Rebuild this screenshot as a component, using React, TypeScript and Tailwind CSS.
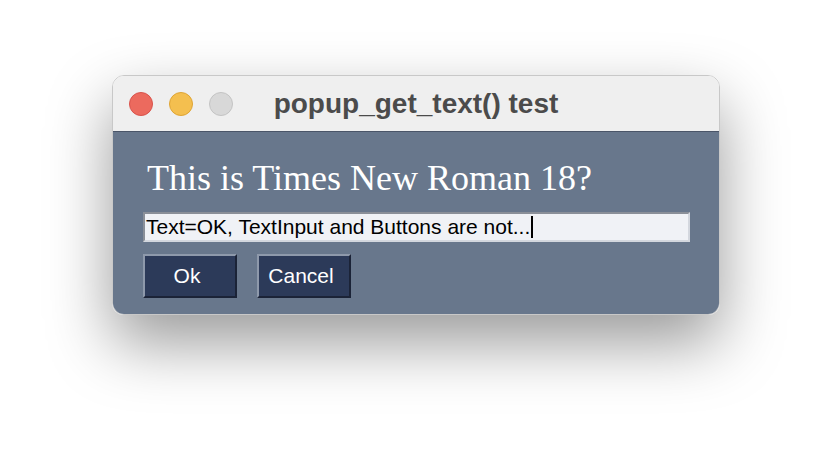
import React from "react";

function TrafficLights() {
  return (
    <div className="flex items-center gap-[16px]">
      <span className="block h-[24px] w-[24px] rounded-full border border-[#d9534c] bg-[#ec6a5e]" />
      <span className="block h-[24px] w-[24px] rounded-full border border-[#dfa535] bg-[#f4bf4f]" />
      <span className="block h-[24px] w-[24px] rounded-full border border-[#c4c4c4] bg-[#d8d8d8]" />
    </div>
  );
}

function Button({ label }: { label: string }) {
  return (
    <button className="h-[44px] w-[94px] border-2 border-t-[#8e99ab] border-l-[#8e99ab] border-b-[#1b2337] border-r-[#1b2337] bg-[#2c3a59] pr-[6px] text-[21px] text-white font-['Liberation_Sans',Arial,sans-serif]">
      {label}
    </button>
  );
}

export default function App() {
  return (
    <div className="h-[462px] w-[832px] bg-white pl-[112px] pt-[75px]">
      <div className="w-[608px] overflow-hidden rounded-[12px] border border-[#c8c8c8] shadow-[0_28px_64px_rgba(0,0,0,0.4)]">
        <div className="relative flex h-[56px] items-center border-b border-[#4a5568] bg-[#efefef] px-[16px]">
          <TrafficLights />
          <div className="absolute inset-0 flex items-center justify-center text-[28px] font-bold text-[#4b4b4b] font-['Liberation_Sans',Arial,sans-serif]">
            popup_get_text() test
          </div>
        </div>
        <div className="h-[182px] bg-[#68778c] pl-[30px] pt-[26px]">
          <div className="pl-[4px] text-[36px] leading-[40px] text-white font-['Liberation_Serif','Times_New_Roman',serif]">
            This is Times New Roman 18?
          </div>
          <div className="mt-[14px] flex h-[30px] w-[547px] items-center border-2 border-t-[#8a8f98] border-l-[#8a8f98] border-b-[#d3d7de] border-r-[#d3d7de] bg-[#f0f2f6] pl-[1px] text-[21px] text-black font-['Liberation_Sans',Arial,sans-serif]">
            <span>Text=OK, TextInput and Buttons are not...</span>
            <span className="ml-[1px] block h-[22px] w-[2px] bg-black" />
          </div>
          <div className="mt-[12px] flex gap-[20px]">
            <Button label="Ok" />
            <Button label="Cancel" />
          </div>
        </div>
      </div>
    </div>
  );
}
